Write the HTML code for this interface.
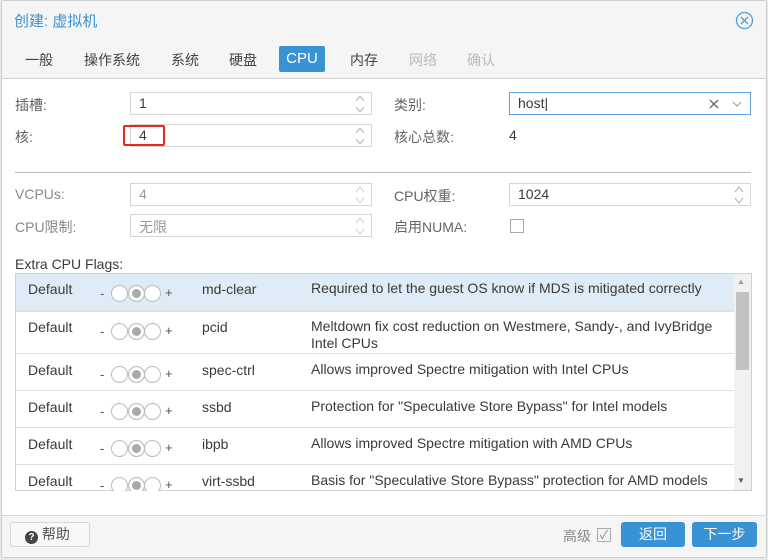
<!DOCTYPE html>
<html><head><meta charset="utf-8"><style>
*{box-sizing:border-box;margin:0;padding:0}
body{width:768px;height:560px;background:#e8e8e8;font-family:"Liberation Sans","Noto Sans CJK SC",sans-serif;font-size:14px;color:#3a3a3a;position:relative;overflow:hidden}
.win{position:absolute;left:1px;top:0;width:766px;height:558px;background:#f5f5f5;border:1px solid #cfcfcf;border-radius:3px}
.a{position:absolute;white-space:nowrap}
.content{position:absolute;left:2px;top:78px;width:763px;height:437px;background:#fff;border-top:1px solid #d0d0d0}
.inp{position:absolute;height:23px;border:1px solid #d6d6d6;background:#fff;padding:2px 8px;font-size:14px}
.spin{position:absolute;right:6px;top:2px}
.lbl{color:#666}
.tab{top:50px;font-size:14px;color:#444}
.row{position:absolute;left:16px;width:718px;border-bottom:1px solid #e0e0e0}
.row span{position:absolute;top:8px}
.tri{position:absolute;top:12px;left:84px;width:66px;height:16px;font-size:13px;color:#555}
.c{position:absolute;top:0;width:17px;height:17px;border:1px solid #bbb;border-radius:50%;background:#fff}
.btn{position:absolute;top:522px;height:25px;border-radius:3px;color:#fff;background:#3892d4;text-align:center;line-height:25px;font-size:14px}
</style></head><body>
<div class="win"></div>
<div class="a" style="left:14px;top:10px;font-size:15px;color:#3892d4">创建: 虚拟机</div>
<svg class="a" style="left:735px;top:11px" width="19" height="19"><circle cx="9.5" cy="9.5" r="8" fill="none" stroke="#4a9fdc" stroke-width="1.3"/><path d="M6 6L13 13M13 6L6 13" stroke="#4a9fdc" stroke-width="1.3"/></svg>
<div class="a tab" style="left:25px">一般</div>
<div class="a tab" style="left:84px">操作系统</div>
<div class="a tab" style="left:171px">系统</div>
<div class="a tab" style="left:229px">硬盘</div>
<div class="a" style="left:279px;top:46px;width:46px;height:26px;background:#3892d4;border-radius:2px;color:#fff;text-align:center;line-height:26px;font-size:15px">CPU</div>
<div class="a tab" style="left:350px">内存</div>
<div class="a tab" style="left:409px;color:#bbb">网络</div>
<div class="a tab" style="left:467px;color:#bbb">确认</div>
<div class="content"></div>

<div class="a lbl" style="left:15px;top:95px">插槽:</div>
<div class="inp" style="left:130px;top:92px;width:242px">1<svg class="spin" width="10" height="18"><path d="M1 6L5 1L9 6M1 12L5 17L9 12" fill="none" stroke="#aaa"/></svg></div>
<div class="a lbl" style="left:394px;top:95px">类别:</div>
<div class="inp" style="left:509px;top:92px;width:242px;border-color:#5fa2dd">host|<svg style="position:absolute;right:31px;top:6px" width="10" height="10"><path d="M1 1L9 9M9 1L1 9" stroke="#666" stroke-width="1.3"/></svg><svg style="position:absolute;right:8px;top:8px" width="10" height="6"><path d="M1 1L5 5L9 1" fill="none" stroke="#999"/></svg></div>
<div class="a lbl" style="left:15px;top:127px">核:</div>
<div class="inp" style="left:130px;top:124px;width:242px">4<svg class="spin" width="10" height="18"><path d="M1 6L5 1L9 6M1 12L5 17L9 12" fill="none" stroke="#aaa"/></svg></div>
<div class="a" style="left:123px;top:125px;width:42px;height:21px;border:2px solid #e8281e;border-radius:2px"></div>
<div class="a lbl" style="left:394px;top:127px">核心总数:</div>
<div class="a" style="left:509px;top:127px">4</div>
<div class="a" style="left:15px;top:172px;width:736px;height:1px;background:#bbb"></div>

<div class="a lbl" style="left:15px;top:186px;color:#888">VCPUs:</div>
<div class="inp" style="left:130px;top:183px;width:242px;color:#999">4<svg class="spin" width="10" height="18"><path d="M1 6L5 1L9 6M1 12L5 17L9 12" fill="none" stroke="#ccc"/></svg></div>
<div class="a lbl" style="left:394px;top:186px">CPU权重:</div>
<div class="inp" style="left:509px;top:183px;width:242px">1024<svg class="spin" width="10" height="18"><path d="M1 6L5 1L9 6M1 12L5 17L9 12" fill="none" stroke="#aaa"/></svg></div>
<div class="a lbl" style="left:15px;top:217px;color:#888">CPU限制:</div>
<div class="inp" style="left:130px;top:214px;width:242px;color:#999">无限<svg class="spin" width="10" height="18"><path d="M1 6L5 1L9 6M1 12L5 17L9 12" fill="none" stroke="#ccc"/></svg></div>
<div class="a lbl" style="left:394px;top:217px">启用NUMA:</div>
<div class="a" style="left:510px;top:219px;width:14px;height:14px;border:1px solid #aaa"></div>

<div class="a" style="left:15px;top:256px">Extra CPU Flags:</div>
<div class="a" style="left:15px;top:273px;width:737px;height:218px;border:1px solid #d0d0d0;overflow:hidden">
 <div class="row" style="left:0;top:0;height:38px;background:#dfebf7"></div>
 <div style="position:absolute;left:718px;top:0;width:17px;height:216px;background:#f1f1f1"></div>
 <div style="position:absolute;left:720px;top:18px;width:13px;height:78px;background:#c1c1c1"></div>
 <div style="position:absolute;left:721px;top:3px;font-size:8px;color:#999">▲</div>
 <div style="position:absolute;left:721px;top:202px;font-size:8px;color:#555">▼</div>
</div>
<div id="rows"></div>
<script>
var d=[["md-clear","Required to let the guest OS know if MDS is mitigated correctly",273,38],["pcid","Meltdown fix cost reduction on Westmere, Sandy-, and IvyBridge<br>Intel CPUs",311,43],["spec-ctrl","Allows improved Spectre mitigation with Intel CPUs",354,37],["ssbd","Protection for \"Speculative Store Bypass\" for Intel models",391,37],["ibpb","Allows improved Spectre mitigation with AMD CPUs",428,37],["virt-ssbd","Basis for \"Speculative Store Bypass\" protection for AMD models",465,26]];
var h="";d.forEach(function(r){h+='<div class="row" style="top:'+r[2]+'px;height:'+r[3]+'px;'+(r[3]==26?'border:0;overflow:hidden':'')+'"><span style="left:12px">Default</span><div class="tri"><span style="left:0;top:1px">-</span><div class="c" style="left:11px"></div><div class="c" style="left:28px;background:#aaa;box-shadow:inset 0 0 0 3px #fff"></div><div class="c" style="left:44px"></div><span style="left:65px;top:0px">+</span></div><span style="left:186px">'+r[0]+'</span><span style="left:295px;line-height:17px;top:7px">'+r[1]+'</span></div>'});
document.getElementById("rows").innerHTML=h;
</script>
<div class="a" style="left:2px;top:515px;width:763px;height:1px;background:#d8d8d8"></div>
<div class="a" style="left:10px;top:522px;width:80px;height:25px;border:1px solid #d8d8d8;border-radius:3px;background:#f8f8f8;line-height:23px;padding-left:14px;color:#555"><span style="display:inline-block;width:13px;height:13px;border-radius:50%;background:#444;color:#fff;font-size:10px;line-height:13px;text-align:center;font-weight:bold;vertical-align:-1px">?</span> 帮助</div>
<div class="a" style="left:563px;top:526px;color:#888">高级</div>
<div class="a" style="left:597px;top:528px;width:14px;height:14px;border:1px solid #aaa;color:#888;font-size:12px;line-height:12px;text-align:center">✓</div>
<div class="btn" style="left:621px;width:64px">返回</div>
<div class="btn" style="left:692px;width:65px">下一步</div>
</body></html>
